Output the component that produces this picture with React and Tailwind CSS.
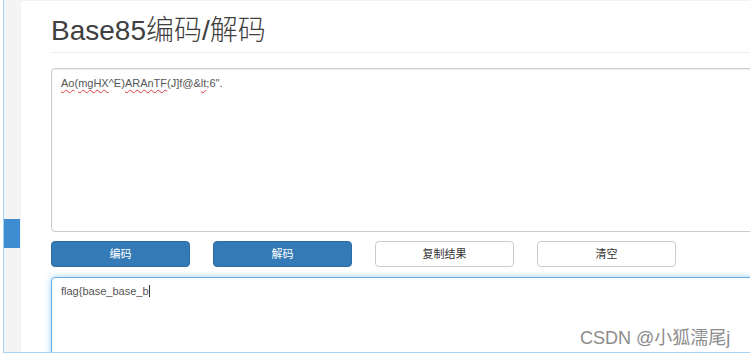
import React from 'react';

const FONT = { fontFamily: '"Liberation Sans", Arial, "Noto Sans CJK SC", sans-serif' };

function Squiggle({ children }) {
  return <span className="underline decoration-wavy decoration-[#e0393e] decoration-1 underline-offset-2">{children}</span>;
}

function ActionButton({ primary, children }) {
  const base = 'h-[26px] w-[139px] rounded-[4px] text-[11px] flex items-center justify-center';
  if (primary) {
    return <button className={`${base} bg-[#337ab7] border border-[#2e6da4] text-white`}>{children}</button>;
  }
  return <button className={`${base} bg-white border border-[#cccccc] text-[#333333]`}>{children}</button>;
}

export default function App() {
  return (
    <div className="relative w-[750px] h-[358px] overflow-hidden bg-white" style={FONT}>
      <div className="ml-[3px] h-[353px] flex border-l border-b border-[#a9d3f5] overflow-hidden">
        <div className="w-[17px] shrink-0 bg-[#f4f4f4] pt-[219px]">
          <div className="h-[29px] w-[16px] bg-[#3d8bd0]" />
        </div>
        <div className="flex-1 pl-[30px] border-t border-[#f2f2f2] overflow-hidden">
          <div className="w-[760px]">
            <h1 className="pt-[12px] text-[28px] leading-[36px] text-[#404040] font-light">Base85编码/解码</h1>
            <div className="mt-[3px] h-px bg-[#eeeeee]" />
            <div className="mt-[15px] h-[164px] rounded-[4px] border border-[#cccccc] shadow-[inset_0_1px_1px_rgba(0,0,0,0.075)] px-[9px] py-[6px] text-[11px] leading-[16px] text-[#555555]">
              <Squiggle>Ao</Squiggle>(<Squiggle>mgHX</Squiggle>^E)<Squiggle>ARAnTF</Squiggle>(J]f@&amp;<Squiggle>lt</Squiggle>;6".
            </div>
            <div className="mt-[9px] flex gap-[23px]">
              <ActionButton primary>编码</ActionButton>
              <ActionButton primary>解码</ActionButton>
              <ActionButton>复制结果</ActionButton>
              <ActionButton>清空</ActionButton>
            </div>
            <div className="mt-[10px] h-[120px] rounded-[4px] border border-[#66afe9] shadow-[0_0_6px_rgba(102,175,233,0.6)] px-[9px] py-[5px] text-[11px] leading-[16px] text-[#555555]">
              flag{'{'}base_base_b<span className="inline-block w-px h-[12px] bg-[#333] align-[-2px]" />
            </div>
          </div>
        </div>
      </div>
      <div
        className="absolute left-[580px] top-[327px] text-[18px] leading-[22px] text-[#8c8c8c] whitespace-nowrap"
        style={{ ...FONT, textShadow: '0 0 2px #fff, 0 0 1px #fff' }}
      >
        CSDN @小狐濡尾j
      </div>
    </div>
  );
}
